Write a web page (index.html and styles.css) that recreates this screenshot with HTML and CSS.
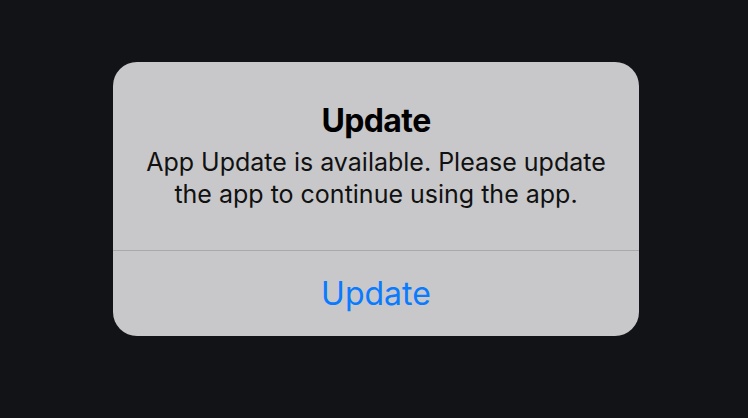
FILE: index.html
```html
<!DOCTYPE html>
<html>
<head>
<meta charset="utf-8">
<link rel="stylesheet" href="styles.css">
</head>
<body>
<div class="stage">
  <div class="alert">
    <div class="content">
      <div class="title">Update</div>
      <div class="message">App Update is available. Please update<br>the app to continue using the app.</div>
    </div>
    <div class="actions">
      <div class="button">Update</div>
    </div>
  </div>
</div>
</body>
</html>
```
FILE: styles.css
```css
html, body {
  margin: 0;
  padding: 0;
  background: #121316;
  width: 748px;
  height: 418px;
  overflow: hidden;
}
.stage {
  padding-top: 62px;
  padding-left: 113px;
}
.alert {
  width: 526px;
  height: 274px;
  background: #c8c8ca;
  border-radius: 24px;
  display: flex;
  flex-direction: column;
  font-family: Inter, "Noto Sans", sans-serif;
}
.content {
  height: 189px;
  flex: none;
  border-bottom: 1px solid #a9a9ab;
  display: flex;
  flex-direction: column;
  align-items: center;
  padding-top: 40px;
  box-sizing: border-box;
}
.title {
  font-size: 32px;
  font-weight: 700;
  color: #000;
  line-height: 38px;
  letter-spacing: -0.6px;
}
.message {
  font-size: 25px;
  color: #111;
  text-align: center;
  line-height: 32px;
  margin-top: 6px;
}
.actions {
  flex: 1;
  display: flex;
  align-items: center;
  justify-content: center;
}
.button {
  font-size: 32px;
  color: #0a7aff;
}
```
